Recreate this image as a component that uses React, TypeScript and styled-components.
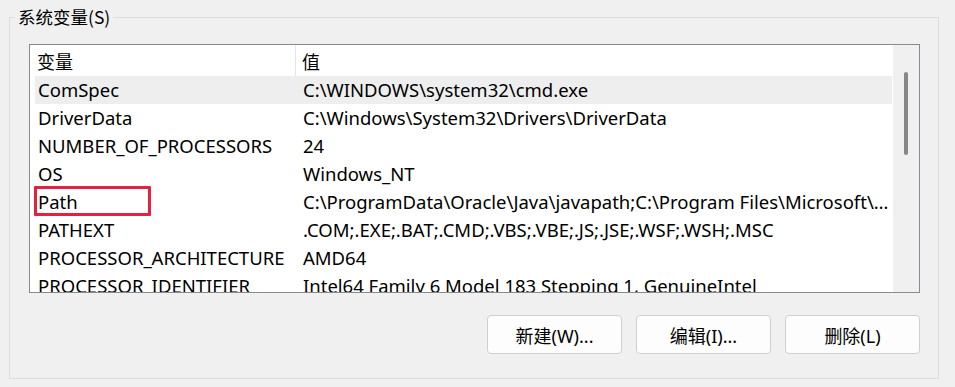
import React from 'react';
import styled, { createGlobalStyle } from 'styled-components';

const GlobalStyle = createGlobalStyle`
  html, body {
    margin: 0;
    padding: 0;
    background: #f0f0f0;
  }
  body {
    width: 955px;
    height: 387px;
    overflow: hidden;
    font-family: "Noto Sans", "Noto Sans CJK SC", sans-serif;
    color: #000;
  }
`;

const Page = styled.div`
  padding: 17px 0 0 9px;
`;

const Group = styled.div`
  box-sizing: border-box;
  width: 930px;
  height: 362px;
  border: 1px solid #dcdcdc;
  padding: 0 18px 0 19px;
  display: flex;
  flex-direction: column;
`;

const GroupTitle = styled.div`
  align-self: flex-start;
  margin: -12px 0 0 -14px;
  padding: 0 3px;
  background: #f0f0f0;
  font-family: "Noto Sans CJK SC", sans-serif;
  font-size: 17.5px;
  line-height: 22px;
`;

const ListBox = styled.div`
  box-sizing: border-box;
  margin-top: 16px;
  height: 249px;
  border: 1px solid #868a91;
  display: flex;
  background: #fff;
`;

const Table = styled.div`
  flex: 1;
  min-width: 0;
  overflow: hidden;
  display: flex;
  flex-direction: column;
`;

const HeaderRow = styled.div`
  flex: none;
  height: 31px;
  display: grid;
  grid-template-columns: 266px 1fr;
  align-items: center;
  font-size: 18px;
`;

const HeaderCell = styled.div<{ $divider?: boolean }>`
  height: 100%;
  display: flex;
  align-items: center;
  padding-left: ${(p) => (p.$divider ? '7px' : '6px')};
  border-right: ${(p) => (p.$divider ? '1px solid #e5e5e5' : 'none')};
  font-family: "Noto Sans CJK SC", sans-serif;
`;

const Row = styled.div<{ $hover?: boolean }>`
  flex: none;
  height: 28px;
  margin-left: 5px;
  display: grid;
  grid-template-columns: 265px minmax(0, 1fr);
  background: ${(p) => (p.$hover ? '#eeeeee' : 'transparent')};
  font-size: 18.5px;
`;

const Cell = styled.div`
  padding: 0 0 0 3px;
  line-height: 28px;
  white-space: nowrap;
  overflow: hidden;
  text-overflow: ellipsis;
`;

const NameCell = styled.div`
  position: relative;
  padding-left: 3px;
  line-height: 28px;
  white-space: nowrap;
`;

const Marker = styled.div`
  position: absolute;
  left: -1px;
  top: -2px;
  width: 117px;
  height: 30px;
  box-sizing: border-box;
  border: 3px solid #e2223f;
  border-radius: 1px;
`;

const ScrollTrack = styled.div`
  flex: none;
  width: 26px;
  background: #f0f0f0;
  border-left: 1px solid #fff;
  display: flex;
  justify-content: center;
  padding-top: 27px;
`;

const ScrollThumb = styled.div`
  width: 4px;
  height: 83px;
  border-radius: 2px;
  background: #878787;
`;

const ButtonRow = styled.div`
  margin-top: 22px;
  display: flex;
  justify-content: flex-end;
  gap: 14px;
`;

const Button = styled.button`
  box-sizing: border-box;
  width: 135px;
  height: 39px;
  border: 1px solid #d0d0d0;
  border-radius: 4px;
  background: #fdfdfd;
  font-family: "Noto Sans", "Noto Sans CJK SC", sans-serif;
  font-size: 18px;
  color: #000;
  padding: 0;
`;

const ROWS = [
  { name: 'ComSpec', value: 'C:\\WINDOWS\\system32\\cmd.exe', hover: true },
  { name: 'DriverData', value: 'C:\\Windows\\System32\\Drivers\\DriverData' },
  { name: 'NUMBER_OF_PROCESSORS', value: '24' },
  { name: 'OS', value: 'Windows_NT' },
  {
    name: 'Path',
    value:
      'C:\\ProgramData\\Oracle\\Java\\javapath;C:\\Program Files\\Microsoft\\jdk-11.0.16.101-hotspot\\bin',
    marked: true,
  },
  { name: 'PATHEXT', value: '.COM;.EXE;.BAT;.CMD;.VBS;.VBE;.JS;.JSE;.WSF;.WSH;.MSC' },
  { name: 'PROCESSOR_ARCHITECTURE', value: 'AMD64' },
  { name: 'PROCESSOR_IDENTIFIER', value: 'Intel64 Family 6 Model 183 Stepping 1, GenuineIntel' },
];

export default function App() {
  return (
    <Page>
      <GlobalStyle />
      <Group>
        <GroupTitle>系统变量(S)</GroupTitle>
        <ListBox>
          <Table>
            <HeaderRow>
              <HeaderCell $divider>变量</HeaderCell>
              <HeaderCell>值</HeaderCell>
            </HeaderRow>
            {ROWS.map((r) => (
              <Row key={r.name} $hover={r.hover}>
                <NameCell>
                  {r.marked && <Marker />}
                  {r.name}
                </NameCell>
                <Cell>{r.value}</Cell>
              </Row>
            ))}
          </Table>
          <ScrollTrack>
            <ScrollThumb />
          </ScrollTrack>
        </ListBox>
        <ButtonRow>
          <Button>新建(W)...</Button>
          <Button>编辑(I)...</Button>
          <Button>删除(L)</Button>
        </ButtonRow>
      </Group>
    </Page>
  );
}
